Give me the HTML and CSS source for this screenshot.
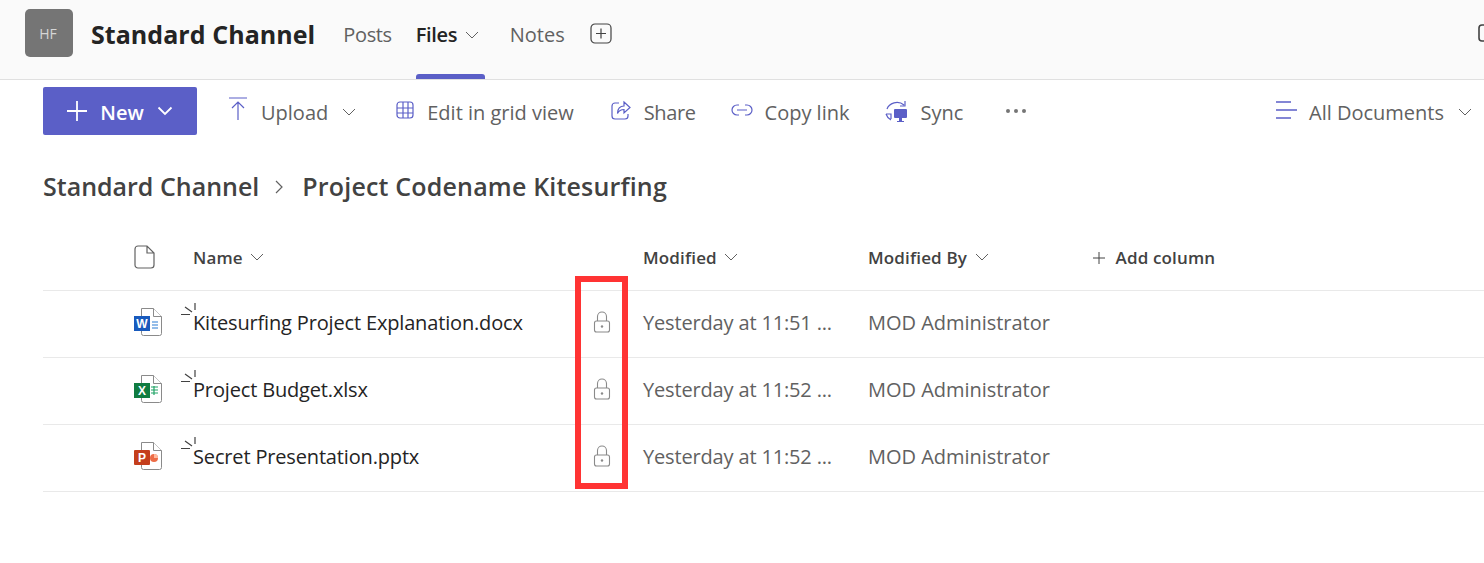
FILE: index.html
```html
<!DOCTYPE html>
<html lang="en">

<head>
    <meta charset="UTF-8">
    <meta name="viewport" content="width=device-width, initial-scale=1.0">
    <title>Standard Channel</title>
    <link rel="stylesheet" href="styles.css">
</head>

<body>
    <header class="topbar">
        <div class="avatar">HF</div>
        <h1 class="channel">Standard Channel</h1>
        <nav class="tabs">
            <a class="tab tab_posts">Posts</a>
            <a class="tab tab_files active">Files
                <svg class="chev" width="14" height="14" viewBox="0 0 14 14"><path d="M1 4l6 6 6-6" /></svg>
            </a>
            <a class="tab tab_notes">Notes</a>
            <svg class="addtab" width="22" height="22" viewBox="0 0 22 22"><rect x="1" y="1" width="20" height="19" rx="4" /><path d="M11 5.500v10M6 10.500h10" /></svg>
        </nav>
        <svg class="cornericon" width="16" height="18" viewBox="0 0 16 18"><rect x="1" y="1" width="14" height="16" rx="3" /></svg>
    </header>

    <div class="toolbar">
        <button class="newbtn">
            <svg width="20" height="20" viewBox="0 0 20 20"><path d="M10 0v20M0 10h20" /></svg>
            <span>New</span>
            <svg width="16" height="14" viewBox="0 0 16 14"><path d="M1.500 3.500l6.500 6.500 6.500-6.500" /></svg>
        </button>
        <a class="cmd cmd_upload">
            <svg class="ic" width="20" height="24" viewBox="0 0 20 24"><path d="M1 1h18M10 23V5M4 11l6-6 6 6" /></svg>
            <span>Upload</span>
            <svg class="chev" width="14" height="14" viewBox="0 0 14 14"><path d="M1 4l6 6 6-6" /></svg>
        </a>
        <a class="cmd cmd_grid">
            <svg class="ic" width="20" height="20" viewBox="0 0 20 20"><rect x="2" y="2" width="16" height="16" rx="3" /><path d="M2 8h16M2 13h16M8 2v16M13 2v16" /></svg>
            <span>Edit in grid view</span>
        </a>
        <a class="cmd cmd_share">
            <svg class="ic" width="20" height="20" viewBox="0 0 20 20"><path d="M8 3H4a3 3 0 0 0-3 3v10a3 3 0 0 0 3 3h10a3 3 0 0 0 3-3v-2" /><path d="M13 2l6 5.500-6 5.500v-3.500c-3 0-5 1-6.500 4 0-5 2.500-7.500 6.500-7.500z" /></svg>
            <span>Share</span>
        </a>
        <a class="cmd cmd_link">
            <svg class="ic" width="22" height="14" viewBox="0 0 22 14"><path d="M8 2H6a5 5 0 0 0 0 10h2M14 2h2a5 5 0 0 1 0 10h-2M6 7h10" /></svg>
            <span>Copy link</span>
        </a>
        <a class="cmd cmd_sync">
            <svg class="ic" width="24" height="24" viewBox="0 0 24 24">
                <path d="M2 9C4 3 13 0 19 5M20 1v5h-5M1 14h5v5M1 14c1 3 3 5 5 6" />
                <rect class="solid" x="9" y="9" width="13" height="9" rx="1" />
                <path class="solid" d="M14 18h3v3h2v1h-7v-1h2z" />
            </svg>
            <span>Sync</span>
        </a>
        <a class="dots"><i></i><i></i><i></i></a>
        <a class="cmd cmd_view">
            <svg class="ic" width="22" height="18" viewBox="0 0 22 18"><path d="M1 1h15M1 9h21M1 17h15" /></svg>
            <span>All Documents</span>
            <svg class="chev" width="14" height="14" viewBox="0 0 14 14"><path d="M1 4l6 6 6-6" /></svg>
        </a>
    </div>

    <div class="crumbs">
        <span>Standard Channel</span>
        <svg width="10" height="14" viewBox="0 0 10 14"><path d="M2 1l6 6-6 6" /></svg>
        <strong>Project Codename Kitesurfing</strong>
    </div>

    <div class="filelist">
        <div class="row headrow">
            <div class="cell_icon">
                <svg class="docicon" width="22" height="24" viewBox="0 0 22 24"><path d="M4 1h9l7 7v12a3 3 0 0 1-3 3H4a3 3 0 0 1-3-3V4a3 3 0 0 1 3-3zM13 1v7h7" /></svg>
            </div>
            <div class="cell_name">Name <svg class="chev" width="14" height="14" viewBox="0 0 14 14"><path d="M1 4l6 6 6-6" /></svg></div>
            <div class="cell_lock"></div>
            <div class="cell_mod">Modified <svg class="chev" width="14" height="14" viewBox="0 0 14 14"><path d="M1 4l6 6 6-6" /></svg></div>
            <div class="cell_by">Modified By <svg class="chev" width="14" height="14" viewBox="0 0 14 14"><path d="M1 4l6 6 6-6" /></svg></div>
            <div class="cell_add"><svg class="plus" width="12" height="12" viewBox="0 0 12 12"><path d="M6 0v12M0 6h12" /></svg> Add column</div>
        </div>

        <div class="row">
            <div class="cell_icon">
                <svg class="fileicon" width="28" height="28" viewBox="0 0 28 28">
                    <path class="page" d="M7.500.500h12l8 8v17a2 2 0 0 1-2 2h-16a2 2 0 0 1-2-2z" />
                    <path class="page" d="M19.500.500v8h8" />
                    <path d="M18 14h6M18 17h6M18 20h6" stroke="#2b7cd3" fill="none" />
                    <rect x="0" y="8" width="16" height="15" fill="#185abd" />
                    <text x="8" y="20" class="badge">W</text>
                </svg>
            </div>
            <div class="cell_name name">
                <svg class="spark" width="15" height="13" viewBox="0 0 15 13"><path d="M0 11.500h9M4 4l7 5M14 0v7" /></svg>
                Kitesurfing Project Explanation.docx
            </div>
            <div class="cell_lock">
                <svg class="lock" width="18" height="22" viewBox="0 0 18 22"><path d="M4.500 10V5.500a4.500 4.500 0 0 1 9 0V10" /><rect x="1.500" y="10" width="15" height="11" rx="2" /><circle cx="9" cy="15.500" r="1.200" /></svg>
            </div>
            <div class="cell_mod">Yesterday at 11:51 ...</div>
            <div class="cell_by">MOD Administrator</div>
        </div>

        <div class="row">
            <div class="cell_icon">
                <svg class="fileicon" width="28" height="28" viewBox="0 0 28 28">
                    <path class="page" d="M7.500.500h12l8 8v17a2 2 0 0 1-2 2h-16a2 2 0 0 1-2-2z" />
                    <path class="page" d="M19.500.500v8h8" />
                    <path d="M17 12h7M17 15h7M17 18h7M20 11v9" stroke="#21a366" fill="none" />
                    <rect x="0" y="8" width="16" height="15" fill="#107c41" />
                    <text x="8" y="20" class="badge">X</text>
                </svg>
            </div>
            <div class="cell_name name">
                <svg class="spark" width="15" height="13" viewBox="0 0 15 13"><path d="M0 11.500h9M4 4l7 5M14 0v7" /></svg>
                Project Budget.xlsx
            </div>
            <div class="cell_lock">
                <svg class="lock" width="18" height="22" viewBox="0 0 18 22"><path d="M4.500 10V5.500a4.500 4.500 0 0 1 9 0V10" /><rect x="1.500" y="10" width="15" height="11" rx="2" /><circle cx="9" cy="15.500" r="1.200" /></svg>
            </div>
            <div class="cell_mod">Yesterday at 11:52 ...</div>
            <div class="cell_by">MOD Administrator</div>
        </div>

        <div class="row">
            <div class="cell_icon">
                <svg class="fileicon" width="28" height="28" viewBox="0 0 28 28">
                    <path class="page" d="M7.500.500h12l8 8v17a2 2 0 0 1-2 2h-16a2 2 0 0 1-2-2z" />
                    <path class="page" d="M19.500.500v8h8" />
                    <circle cx="20" cy="16" r="4" fill="#ed6c47" />
                    <path d="M20 12a4 4 0 0 1 4 4h-4z" fill="#ffba9e" />
                    <rect x="0" y="8" width="16" height="15" rx="1" fill="#c43e1c" />
                    <text x="8" y="20" class="badge">P</text>
                </svg>
            </div>
            <div class="cell_name name">
                <svg class="spark" width="15" height="13" viewBox="0 0 15 13"><path d="M0 11.500h9M4 4l7 5M14 0v7" /></svg>
                Secret Presentation.pptx
            </div>
            <div class="cell_lock">
                <svg class="lock" width="18" height="22" viewBox="0 0 18 22"><path d="M4.500 10V5.500a4.500 4.500 0 0 1 9 0V10" /><rect x="1.500" y="10" width="15" height="11" rx="2" /><circle cx="9" cy="15.500" r="1.200" /></svg>
            </div>
            <div class="cell_mod">Yesterday at 11:52 ...</div>
            <div class="cell_by">MOD Administrator</div>
        </div>

        <div class="redbox"></div>
    </div>
</body>

</html>
```

FILE: styles.css
```css
* {
    box-sizing: border-box;
}

html,
body {
    height: 100%;
    overflow: hidden;
}

body {
    margin: 0;
    font-family: "Open Sans", "Noto Sans", sans-serif;
    font-size: 20px;
    color: #616161;
    background-color: #fff;
}

svg {
    fill: none;
    stroke: currentColor;
    stroke-width: 1.2;
    flex: none;
}

/* top bar */
.topbar {
    height: 80px;
    padding-left: 25px;
    display: flex;
    align-items: flex-start;
    background-color: #fafafa;
    border-bottom: 1px solid #e0e0e0;
}

.avatar {
    width: 48px;
    height: 48px;
    margin-top: 9px;
    padding-right: 2px;
    display: flex;
    align-items: center;
    justify-content: center;
    border-radius: 5px;
    background-color: #757575;
    color: #d6d6d6;
    font-size: 14px;
}

.channel {
    margin: 14px 0 0 18px;
    font-size: 25px;
    line-height: 40px;
    font-weight: 700;
    letter-spacing: 0.05px;
    color: #242424;
}

.tabs {
    display: flex;
    align-items: flex-start;
    margin-left: 28px;
}

.tab {
    height: 79px;
    padding-top: 20px;
    line-height: 30px;
    letter-spacing: -0.35px;
    color: #616161;
    position: relative;
}

.tab_files {
    margin-left: 24px;
    width: 69px;
    white-space: nowrap;
    font-weight: 600;
    color: #242424;
}

.tab_files .chev {
    margin-left: 3px;
}

.tab_files.active::after {
    content: "";
    position: absolute;
    left: 0;
    right: 0;
    bottom: 0;
    height: 5px;
    border-radius: 3px 3px 0 0;
    background-color: #5b5fc7;
}

.tab_notes {
    margin-left: 25px;
    letter-spacing: 0;
}

.addtab {
    margin: 23px 0 0 25px;
    color: #424242;
}

.cornericon {
    margin: 24px -10px 0 auto;
    color: #424242;
    stroke-width: 1.6;
}

.chev {
    color: #616161;
    stroke-width: 1;
}

/* command bar */
.toolbar {
    height: 62px;
    padding: 7px 0 0 43px;
    display: flex;
    align-items: flex-start;
    letter-spacing: 0;
}

.newbtn {
    width: 154px;
    height: 48px;
    padding: 0;
    display: flex;
    align-items: center;
    justify-content: center;
    gap: 13px;
    border: 0;
    border-radius: 2px;
    background-color: #5b5fc7;
    color: #fff;
    font-family: inherit;
    font-size: 20px;
    font-weight: 600;
}

.newbtn span {
    padding-top: 2px;
}

.newbtn svg {
    stroke-width: 1.8;
}

.cmd {
    height: 48px;
    padding-top: 2px;
    display: flex;
    align-items: center;
    color: #616161;
}

.cmd .ic {
    color: #5b5fc7;
}

.cmd_upload {
    margin-left: 31px;
    gap: 13px;
}

.cmd_upload .ic {
    margin-top: -6px;
}

.cmd_upload .chev {
    margin-left: 1px;
}

.cmd_grid {
    margin-left: 39px;
    gap: 12px;
}

.cmd_grid .ic {
    margin-top: -4px;
}

.cmd_share {
    margin-left: 37px;
    gap: 13px;
}

.cmd_share .ic {
    margin-top: -4px;
}

.cmd_share span {
    letter-spacing: -0.4px;
}

.cmd_link {
    margin-left: 35px;
    gap: 12px;
}

.cmd_link .ic {
    margin-top: -4px;
}

.cmd_sync {
    margin-left: 36px;
    gap: 11px;
}

.dots {
    height: 48px;
    margin-left: 43px;
    display: flex;
    align-items: center;
    gap: 4px;
}

.dots i {
    width: 4px;
    height: 4px;
    border-radius: 50%;
    background-color: #757575;
}

.cmd_view {
    margin-left: auto;
    margin-right: 12px;
    gap: 12px;
}

.cmd_view .ic {
    margin-top: -4px;
    stroke-width: 1.3;
}

.cmd_view .chev {
    margin-left: 2px;
}

.cmd_sync .solid {
    fill: currentColor;
    stroke: none;
}

/* breadcrumb */
.crumbs {
    height: 85px;
    padding: 26px 0 0 43px;
    display: flex;
    align-items: flex-start;
    font-size: 25px;
    line-height: 36px;
    font-weight: 600;
    color: #424242;
}

.crumbs svg {
    margin: 12px 18px 0 15px;
    color: #616161;
    stroke-width: 1.2;
}

.crumbs strong {
    font-weight: 600;
    letter-spacing: 0.18px;
}

/* file list */
.filelist {
    margin-left: 43px;
    position: relative;
    font-size: 20px;
    letter-spacing: -0.16px;
}

.row {
    height: 67px;
    padding-bottom: 4px;
    display: grid;
    grid-template-columns: 150px 392px 58px 225px 225px 1fr;
    align-items: center;
    border-bottom: 1px solid #e9e9e9;
}

.headrow {
    height: 64px;
    padding-bottom: 3px;
    font-size: 17px;
    font-weight: 600;
    letter-spacing: 0.15px;
    color: #424242;
}

.headrow .chev {
    margin-left: 3px;
}

.cell_icon {
    padding-left: 91px;
    display: flex;
}

.docicon {
    color: #616161;
    stroke-width: 1.2;
}

.fileicon {
    stroke: none;
}

.page {
    fill: #fff;
    stroke: #8a8a8a;
    stroke-width: 1;
}

.badge {
    font-family: "Liberation Sans", sans-serif;
    font-size: 12px;
    font-weight: 700;
    letter-spacing: 0;
    fill: #fff;
    stroke: none;
    text-anchor: middle;
}

.cell_name,
.cell_mod,
.cell_by,
.cell_add {
    white-space: nowrap;
}

.row .cell_by {
    letter-spacing: -0.03px;
}

.headrow .cell_by {
    letter-spacing: 0.15px;
}

.name {
    position: relative;
    color: #242424;
}

.spark {
    position: absolute;
    left: -12px;
    top: -6px;
    color: #424242;
    stroke-width: 1.2;
}

.cell_lock {
    display: flex;
    padding-left: 8px;
}

.lock {
    color: #8a8a8a;
    stroke-width: 1.1;
}

.lock circle {
    fill: currentColor;
    stroke: none;
}

.plus {
    color: #424242;
    margin-right: 6px;
    stroke-width: 1;
}

/* red annotation over the lock column */
.redbox {
    position: absolute;
    left: 532px;
    top: 49px;
    width: 53px;
    height: 213px;
    border: 6px solid #ff3333;
}
```
